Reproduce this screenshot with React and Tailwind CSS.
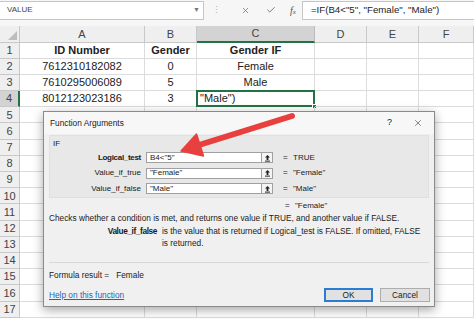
import { X, Check } from "lucide-react";

const colW = ["w-[20px]", "w-[125px]", "w-[52px]", "w-[118px]", "w-[52px]", "w-[52px]", "w-[55px]"];
const letters = ["", "A", "B", "C", "D", "E", "F"];

const data = [
  ["ID Number", "Gender", "Gender IF"],
  ["7612310182082", "0", "Female"],
  ["7610295006089", "5", "Male"],
  ["8012123023186", "3", ""],
];

function HeaderRow() {
  return (
    <div className="flex h-[16.5px] text-[11px] text-[#444]">
      {letters.map((l, i) => {
        if (i === 0) {
          return (
            <div key={i} className={`${colW[i]} relative shrink-0 border-r border-b border-[#c8c8c8] bg-[#efefef]`}>
              <div className="absolute right-[2px] bottom-[2px] h-0 w-0 border-t-[9px] border-r-[9px] border-t-transparent border-r-[#bdbdbd]" />
            </div>
          );
        }
        const sel = l === "C";
        return (
          <div
            key={i}
            className={`${colW[i]} flex shrink-0 items-center justify-center border-r ${
              sel ? "border-b-2 border-b-[#217346] border-r-[#bcbcbc] bg-[#d3d3d3]" : "border-b border-[#c8c8c8] bg-[#efefef]"
            }`}
          >
            {l}
          </div>
        );
      })}
    </div>
  );
}

function Row({ n, cells }) {
  const rowSel = n === 4;
  return (
    <div className="flex h-[16.2px] text-[11px] text-[#222]">
      <div
        className={`${colW[0]} flex shrink-0 items-center justify-center border-b border-[#c8c8c8] text-[#444] ${
          rowSel ? "border-r-2 border-r-[#217346] bg-[#d3d3d3]" : "border-r bg-[#efefef]"
        }`}
      >
        {n}
      </div>
      {[1, 2, 3, 4, 5, 6].map((c) => {
        const val = cells ? cells[c - 1] : "";
        const bold = n === 1;
        const selCell = n === 4 && c === 3;
        return (
          <div
            key={c}
            className={`${colW[c]} relative flex shrink-0 items-center justify-center border-r border-b border-[#dcdcdc] ${bold ? "font-bold" : ""}`}
          >
            {val}
            {selCell && (
              <div className="absolute -left-px -top-px h-[17.2px] w-[119px] border-2 border-[#217346]">
                <span className="absolute left-[2px] top-0 leading-[13px]">"Male")</span>
                <div className="absolute -right-[4px] -bottom-[4px] h-[5px] w-[5px] border border-white bg-[#217346]" />
              </div>
            )}
          </div>
        );
      })}
    </div>
  );
}

function ArgRow({ label, value, result, bold }) {
  return (
    <div className="flex h-[15.5px] items-center">
      <div className={`w-[91px] text-right ${bold ? "font-bold tracking-[-0.3px]" : ""}`}>{label}</div>
      <div className="ml-[5px] flex h-[11px] w-[116px] items-center border border-[#a0a0a0] bg-white pl-[3px] leading-none">
        {value}
      </div>
      <div className="flex h-[11px] w-[11px] items-center justify-center border border-l-0 border-[#a0a0a0] bg-[#f4f4f4]">
        <svg width="7" height="8" viewBox="0 0 7 8">
          <path d="M3.5 1 L1 3.6 H2.6 V6 H4.4 V3.6 H6 Z" fill="#222" />
          <rect x="1" y="6.6" width="5" height="1" fill="#222" />
        </svg>
      </div>
      <div className="ml-[10px] w-[10px]">=</div>
      <div>{result}</div>
    </div>
  );
}

export default function App() {
  return (
    <div className="relative h-[319px] w-[474px] overflow-hidden bg-white font-['Liberation_Sans',Arial,sans-serif]">
      {/* formula bar */}
      <div className="flex h-[20px] items-center bg-[#f6f6f6]">
        <div className="flex h-[19px] w-[204px] items-center justify-between border border-l-0 border-[#c6c6c6] bg-white pl-[7px] pr-[3px] text-[8px] text-[#444]">
          <span>VALUE</span>
          <span className="text-[7px] text-[#777]">▼</span>
        </div>
        <span className="ml-[8px] text-[9px] leading-none text-[#b0b0b0]">⋮</span>
        <X className="ml-[20px] h-[9px] w-[9px] text-[#6f6f6f]" strokeWidth={2} />
        <Check className="ml-[16px] h-[10px] w-[10px] text-[#6f6f6f]" strokeWidth={2.2} />
        <span className="ml-[14px] font-['Liberation_Serif',serif] text-[10px] italic text-[#555]">
          f<span className="text-[7px]">x</span>
        </span>
        <div className="ml-[6px] flex h-[19px] flex-1 items-center border border-r-0 border-[#c6c6c6] bg-white pl-[8px] text-[9.7px] text-[#222]">
          =IF(B4&lt;"5", "Female", "Male")
        </div>
      </div>
      <div className="h-[6px] bg-[#f6f6f6]" />

      {/* grid */}
      <HeaderRow />
      {Array.from({ length: 17 }).map((_, i) => (
        <Row key={i} n={i + 1} cells={data[i]} />
      ))}

      {/* dialog */}
      <div className="absolute left-[43px] top-[111px] flex h-[196px] w-[392px] flex-col border border-[#8a8a8a] bg-[#f0f0f0] text-[8.3px] text-[#1a1a1a] shadow-[0_3px_10px_rgba(0,0,0,0.35)]">
        <div className="flex h-[22px] shrink-0 items-center justify-between bg-[#f7f7f7] pl-[6px] pr-[11px]">
          <span>Function Arguments</span>
          <div className="flex items-center gap-[21px]">
            <span className="text-[9px]">?</span>
            <X className="h-[10px] w-[10px] text-[#333]" strokeWidth={1.4} />
          </div>
        </div>
        <div className="mx-[5px] mt-[1px] flex h-[63px] shrink-0 flex-col border border-[#e0e0e0] bg-[#e8e8e8] text-[8px]">
          <div className="flex h-[14px] items-center pl-[3px] pt-[1px]">IF</div>
          <ArgRow label="Logical_test" value={'B4<"5"'} result="TRUE" bold />
          <ArgRow label="Value_if_true" value={'"Female"'} result={'"Female"'} />
          <ArgRow label="Value_if_false" value={'"Male"'} result={'"Male"'} />
        </div>
        <div className="mt-[2px] flex h-[12px] shrink-0 items-center pl-[241px] text-[8px]">
          <span className="w-[10px]">=</span>
          <span>"Female"</span>
        </div>
        <div className="flex h-[12px] shrink-0 items-center pl-[5px]">
          Checks whether a condition is met, and returns one value if TRUE, and another value if FALSE.
        </div>
        <div className="mt-[1px] flex shrink-0 leading-[12px]">
          <div className="w-[113px] text-right font-bold tracking-[-0.4px]">Value_if_false</div>
          <div className="ml-[5px]">
            is the value that is returned if Logical_test is FALSE. If omitted, FALSE
            <br />
            is returned.
          </div>
        </div>
        <div className="mx-[5px] mt-[13px] shrink-0 border-t border-[#d8d8d8]" />
        <div className="mt-[6px] flex h-[12px] shrink-0 items-center pl-[5px]">
          <span>Formula result =</span>
          <span className="ml-[7px]">Female</span>
        </div>
        <div className="mt-[7px] flex h-[14px] shrink-0 items-center justify-between pl-[5px] pr-[4px]">
          <span className="text-[#1a66b8] underline">Help on this function</span>
          <div className="flex gap-[7px]">
            <div className="flex h-[14px] w-[49px] items-center justify-center border border-[#2b7cd3] bg-[#e1e1e1] outline outline-1 -outline-offset-2 outline-[#2b7cd3]">
              OK
            </div>
            <div className="flex h-[14px] w-[50px] items-center justify-center border border-[#adadad] bg-[#e1e1e1]">
              Cancel
            </div>
          </div>
        </div>
      </div>

      {/* red arrow */}
      <svg className="pointer-events-none absolute left-0 top-0" width="474" height="319" viewBox="0 0 474 319">
        <line x1="292" y1="116" x2="199" y2="145" stroke="#e8403f" strokeWidth="6" strokeLinecap="round" />
        <polygon points="181,151 196.5,134 203.5,156" fill="#e8403f" stroke="#e8403f" strokeWidth="1.5" strokeLinejoin="round" />
      </svg>
    </div>
  );
}
